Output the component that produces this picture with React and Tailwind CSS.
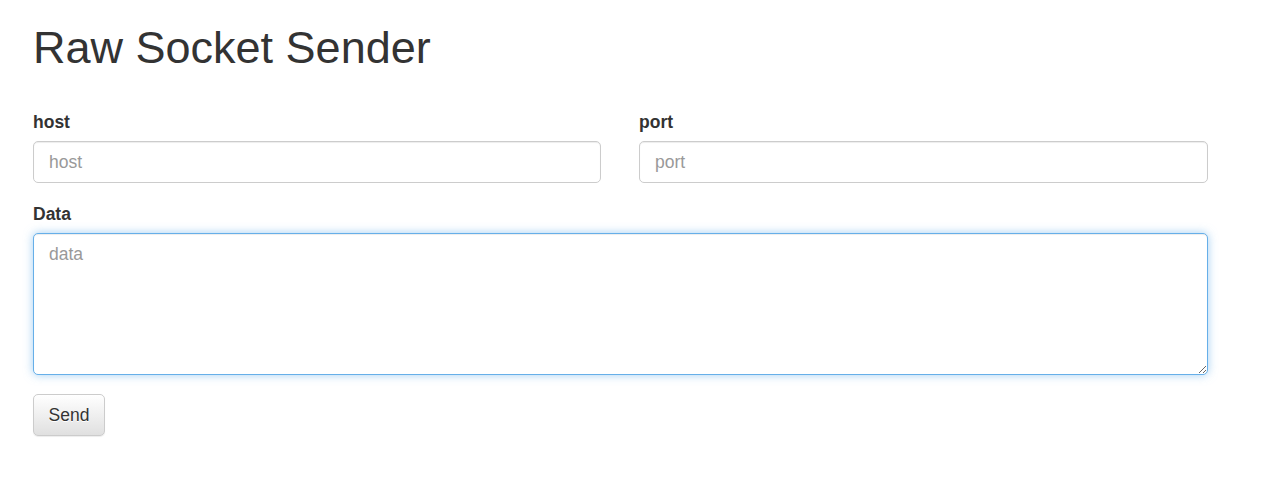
const field =
  "block w-full h-[42px] px-[15px] rounded-[5px] border border-[#cccccc] bg-white text-[17.5px] text-[#555555] placeholder:text-[#999999] shadow-[inset_0_1px_1px_rgba(0,0,0,0.075)] outline-none"

const Label = ({ children, htmlFor }) => (
  <label htmlFor={htmlFor} className="block mb-[6px] text-[17.5px] leading-[25px] font-bold text-[#333333]">
    {children}
  </label>
)

export default function App() {
  return (
    <div className="min-h-screen bg-white px-[33px] font-['Liberation_Sans',Arial,sans-serif] text-[#333333]">
      <h1 className="pt-[23px] text-[45px] leading-[50px] font-normal text-[#333333]">Raw Socket Sender</h1>

      <form className="mt-[37px] w-[1175px]" onSubmit={(e) => e.preventDefault()}>
        <div className="grid grid-cols-[568px_569px] gap-x-[38px] mb-[19px]">
          <div>
            <Label htmlFor="host">host</Label>
            <input id="host" type="text" placeholder="host" className={field} />
          </div>
          <div>
            <Label htmlFor="port">port</Label>
            <input id="port" type="text" placeholder="port" className={field} />
          </div>
        </div>

        <div className="mb-[19px]">
          <Label htmlFor="data">Data</Label>
          <textarea
            id="data"
            placeholder="data"
            className="block w-full h-[142px] px-[15px] py-[8px] rounded-[5px] border border-[#66afe9] bg-white text-[17.5px] leading-[25px] text-[#555555] placeholder:text-[#999999] shadow-[inset_0_1px_1px_rgba(0,0,0,0.075),0_0_10px_rgba(102,175,233,0.6)] outline-none resize-y"
          />
        </div>

        <button
          type="submit"
          className="h-[42px] w-[72px] rounded-[5px] border border-[#cccccc] bg-gradient-to-b from-white to-[#e0e0e0] text-[17.5px] text-[#333333] [text-shadow:0_1px_0_#fff] shadow-[inset_0_1px_0_rgba(255,255,255,0.15),0_1px_1px_rgba(0,0,0,0.075)]"
        >
          Send
        </button>
      </form>
    </div>
  )
}
